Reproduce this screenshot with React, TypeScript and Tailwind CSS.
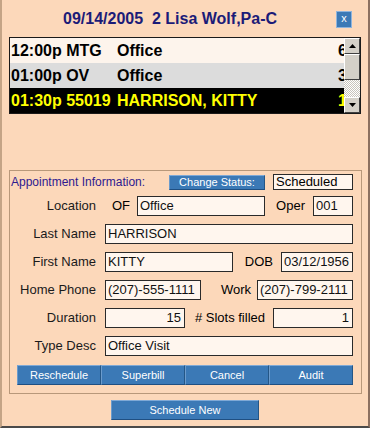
import React from "react";

const font = "font-['Liberation_Sans',Arial,sans-serif]";

function Field({
  className = "",
  value,
  align = "left",
}: {
  className?: string;
  value: string;
  align?: "left" | "right";
}) {
  return (
    <div
      className={`h-[20px] border border-[#2a2a2a] bg-[#fff6ee] px-[2px] text-[13px] leading-[18px] text-[#111] whitespace-nowrap overflow-hidden ${
        align === "right" ? "text-right pr-[3px]" : ""
      } ${className}`}
    >
      {value}
    </div>
  );
}

function Label({ children }: { children: React.ReactNode }) {
  return (
    <div className="w-[87px] shrink-0 pr-[1px] text-right text-[13px] text-[#1a1a1a]">
      {children}
    </div>
  );
}

function BlueButton({
  children,
  className = "",
}: {
  children: React.ReactNode;
  className?: string;
}) {
  return (
    <button
      className={`flex items-center justify-center border border-t-[#7fa9d6] border-l-[#6b9bcc] border-b-[#1f4f82] border-r-[#245686] bg-[#3b79b6] text-[11px] text-white ${className}`}
    >
      {children}
    </button>
  );
}

function Arrow({ up }: { up?: boolean }) {
  return (
    <div className="flex h-[16px] w-[16px] items-center justify-center border border-t-white border-l-white border-b-[#404040] border-r-[#404040] bg-[#d4d0c8]">
      <svg width="7" height="4" viewBox="0 0 7 4">
        {up ? (
          <polygon points="3.5,0 7,4 0,4" fill="#000" />
        ) : (
          <polygon points="0,0 7,0 3.5,4" fill="#000" />
        )}
      </svg>
    </div>
  );
}

const rows = [
  { time: "12:00p MTG", name: "Office", n: "6", cls: "bg-[#fdf4ec] text-black" },
  { time: "01:00p OV", name: "Office", n: "3", cls: "bg-[#dcdcdc] text-black" },
  { time: "01:30p 55019", name: "HARRISON, KITTY", n: "1", cls: "bg-black text-[#ffff00]" },
];

export default function App() {
  return (
    <div
      className={`${font} flex h-[428px] w-[370px] flex-col border-l-2 border-r-2 border-b-2 border-l-[#c4a486] border-r-[#8c7060] border-b-[#4a4a4a] bg-[#fcd8ba]`}
    >
      {/* header */}
      <div className="flex h-[37px] items-center">
        <div className="ml-[61px] text-[16px] font-bold text-[#1b1b78] whitespace-pre">
          09/14/2005  2 Lisa Wolf,Pa-C
        </div>
        <button className="ml-auto mr-[16px] mt-[1px] flex h-[17px] w-[16px] items-center justify-center border border-[#8fb4dc] bg-[#3b79b6] pb-[2px] text-[11px] text-white">
          x
        </button>
      </div>

      {/* schedule list */}
      <div className="ml-[7px] flex h-[77px] w-[352px] border border-[#1a1a1a] bg-white">
        <div className="w-[334px] overflow-hidden">
          {rows.map((r) => (
            <div
              key={r.time}
              className={`flex h-[25px] w-[337px] items-center pl-[1px] text-[16px] font-bold whitespace-nowrap ${r.cls}`}
            >
              <div className="w-[106px]">{r.time}</div>
              <div>{r.name}</div>
              <div className="ml-auto">{r.n}</div>
            </div>
          ))}
        </div>
        <div className="flex w-[16px] flex-col">
          <Arrow up />
          <div className="h-[26px] w-[16px] border border-t-white border-l-white border-b-[#404040] border-r-[#404040] bg-[#d4d0c8]" />
          <div className="flex-1 bg-[repeating-conic-gradient(#ffffff_0%_25%,#c8c4bc_0%_50%)] bg-[length:2px_2px]" />
          <Arrow />
        </div>
      </div>

      {/* appointment group */}
      <div className="ml-[7px] mt-[56px] flex w-[353px] flex-col border border-[#b8987a] pb-[8px] pr-[8px] pt-[3px] text-[13px]">
        <div className="flex h-[16px] items-center">
          <div className="flex-1 pl-[1px] text-[12px] text-[#2e1a90]">
            Appointment Information:
          </div>
          <BlueButton className="mt-[1px] h-[15px] w-[96px]">Change Status:</BlueButton>
          <div className="ml-[8px] h-[16px] w-[80px] border border-[#2a2a2a] bg-[#fff6ee] px-[2px] text-[13px] leading-[14px]">
            Scheduled
          </div>
        </div>

        <div className="mt-[6px] flex flex-col gap-[8px]">
          <div className="flex items-center">
            <Label>Location</Label>
            <div className="w-[40px] pl-[15px]">OF</div>
            <Field className="w-[128px]" value="Office" />
            <div className="flex-1 pr-[8px] text-right">Oper</div>
            <Field className="w-[40px]" value="001" />
          </div>

          <div className="flex items-center">
            <Label>Last Name</Label>
            <Field className="ml-[8px] flex-1" value="HARRISON" />
          </div>

          <div className="flex items-center">
            <Label>First Name</Label>
            <Field className="ml-[8px] w-[128px]" value="KITTY" />
            <div className="flex-1 pr-[8px] text-right">DOB</div>
            <Field className="w-[72px]" value="03/12/1956" align="right" />
          </div>

          <div className="flex items-center">
            <Label>Home Phone</Label>
            <Field className="ml-[8px] w-[96px]" value="(207)-555-1111" />
            <div className="flex-1 pr-[6px] text-right">Work</div>
            <Field className="w-[96px]" value="(207)-799-2111" />
          </div>

          <div className="flex items-center">
            <Label>Duration</Label>
            <Field className="ml-[8px] w-[80px]" value="15" align="right" />
            <div className="flex-1 pr-[8px] text-right"># Slots filled</div>
            <Field className="w-[80px]" value="1" align="right" />
          </div>

          <div className="flex items-center">
            <Label>Type Desc</Label>
            <Field className="ml-[8px] flex-1" value="Office Visit" />
          </div>
        </div>

        <div className="ml-[7px] mt-[9px] flex h-[20px]">
          <BlueButton className="h-[20px] flex-1">Reschedule</BlueButton>
          <BlueButton className="h-[20px] flex-1">Superbill</BlueButton>
          <BlueButton className="h-[20px] flex-1">Cancel</BlueButton>
          <BlueButton className="h-[20px] flex-1">Audit</BlueButton>
        </div>
      </div>

      <div className="mt-[6px] flex justify-center">
        <BlueButton className="h-[20px] w-[148px]">Schedule New</BlueButton>
      </div>
    </div>
  );
}
